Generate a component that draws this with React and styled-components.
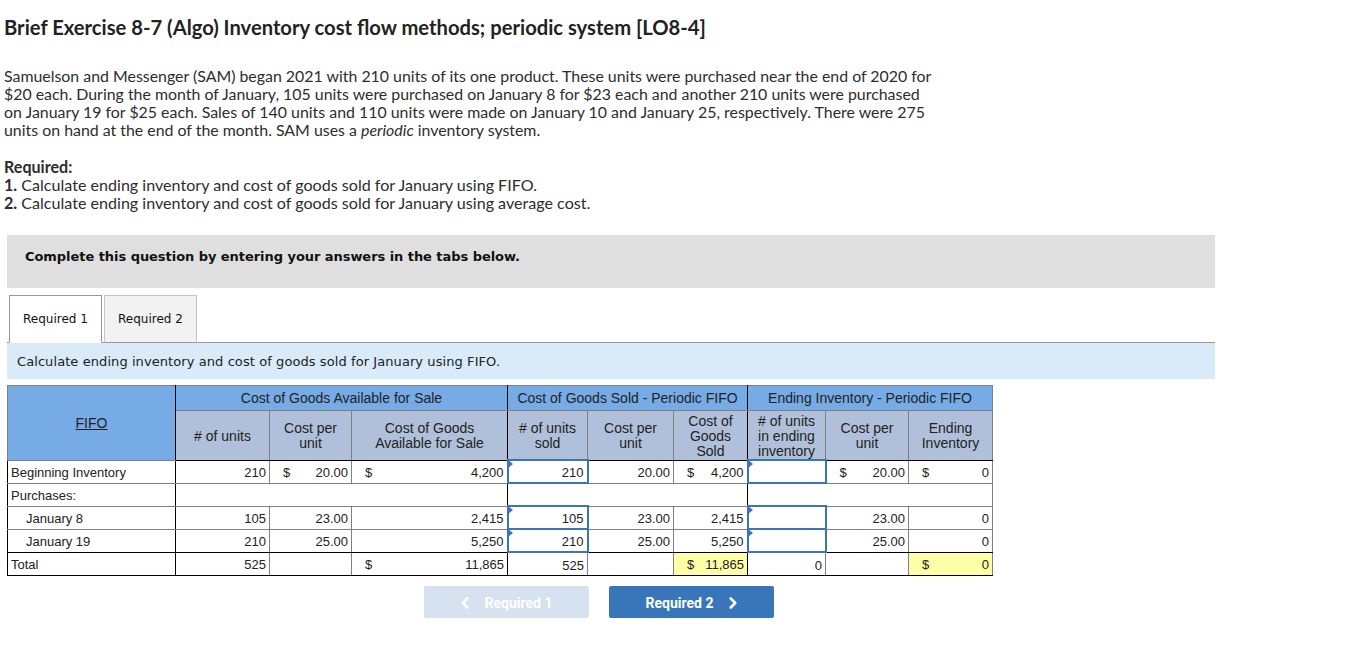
import React from "react";
import styled, { createGlobalStyle } from "styled-components";
import { ChevronLeft, ChevronRight } from "lucide-react";

const GlobalStyle = createGlobalStyle`
  html, body {
    margin: 0;
    padding: 0;
    background: #fff;
  }
`;

const Page = styled.div`
  width: 1368px;
  height: 653px;
  overflow: hidden;
  box-sizing: border-box;
  padding: 15px 0 0 0;
  font-family: Lato, "Open Sans", sans-serif;
  color: #2d2d2d;
`;

const Title = styled.h1`
  margin: 0 0 28px 4px;
  font-size: 20.2px;
  line-height: 24px;
  font-weight: 700;
  color: #222;
`;

const Text = styled.p`
  margin: 0 0 19px 4px;
  width: 932px;
  font-size: ${(p) => p.$size || "15.9px"};
  line-height: 18px;
`;

const Notice = styled.div`
  margin: 23px 153px 0 7px;
  height: 53px;
  box-sizing: border-box;
  padding: 0 0 10px 18px;
  display: flex;
  align-items: center;
  background: #dfdfdf;
  font-family: "DejaVu Sans", sans-serif;
  font-size: 13px;
  letter-spacing: -0.05px;
  font-weight: 700;
  color: #111;
`;

const Tabs = styled.div`
  margin: 7px 153px 0 7px;
  padding-left: 2px;
  display: flex;
  gap: 2px;
  height: 48px;
  box-sizing: border-box;
  border-bottom: 1px solid #999;
`;

const Tab = styled.div`
  width: 93px;
  height: 48px;
  box-sizing: border-box;
  display: flex;
  align-items: center;
  justify-content: center;
  font-family: "DejaVu Sans", sans-serif;
  font-size: 12px;
  color: #111;
  background: ${(p) => (p.$active ? "#fff" : "#f2f2f2")};
  border: 1px solid ${(p) => (p.$active ? "#999" : "#c4c4c4")};
  border-bottom: 1px solid ${(p) => (p.$active ? "#fff" : "#999")};
`;

const Prompt = styled.div`
  margin: 0 153px 6px 7px;
  height: 36px;
  padding-left: 10px;
  display: flex;
  align-items: center;
  background: #d9eaf9;
  font-family: "DejaVu Sans", sans-serif;
  font-size: 13px;
  letter-spacing: 0.08px;
  color: #222;
`;

const Grid = styled.table`
  margin-left: 7px;
  width: 985px;
  table-layout: fixed;
  border-collapse: collapse;
  font-family: "Liberation Sans", Arial, sans-serif;
  font-size: 13px;
  line-height: 15px;
  color: #222;
`;

const GroupHead = styled.th`
  height: 24px;
  padding: 0;
  background: #77abe6;
  font-weight: 400;
  font-size: 14px;
  text-align: center;
  border: 1px solid #808080;
  border-right: 1px solid ${(p) => (p.$last ? "#808080" : "#000")};
`;

const FifoHead = styled.th`
  padding: 2px 0 0;
  background: #77abe6;
  font-weight: 400;
  font-size: 14px;
  text-decoration: underline;
  border: 1px solid #808080;
  border-right: 1px solid #000;
`;

const SubHead = styled.th`
  height: 46px;
  padding: 2px 0 0;
  background: #b0c0da;
  font-weight: 400;
  font-size: 14px;
  line-height: 15px;
  text-align: center;
  border: 1px solid #808080;
  border-bottom: 1px solid #000;
  ${(p) => p.$edge && "border-right: 1px solid #000;"}
`;

const Cell = styled.td`
  height: ${(p) => (p.$short ? "19px" : "20px")};
  padding: 2px 3px 0;
  text-align: right;
  position: relative;
  background: ${(p) => (p.$total ? "#ffffa8" : "#fff")};
  border: 1px solid #808080;
  border-bottom: 1px solid ${(p) => (p.$dark ? "#000" : "#808080")};
  ${(p) => p.$edge && "border-right: 1px solid #000;"}
  ${(p) => p.$input && "border: 2px solid #3c74b4; height: 19px;"}
`;

const Label = styled(Cell)`
  text-align: left;
  padding-left: ${(p) => (p.$indent ? "18px" : "3px")};
  border-left-color: #000;
  border-right: 1px solid #000;
`;

const Money = styled.div`
  display: flex;
  justify-content: space-between;
  padding-left: ${(p) => p.$pad}px;
`;

const Marker = styled.span`
  position: absolute;
  left: -1px;
  top: -1px;
  border-style: solid;
  border-width: 4px 0 4px 5px;
  border-color: transparent transparent transparent #3c74b4;
`;

const Actions = styled.div`
  margin: 10px 0 0 424px;
  display: flex;
  gap: 20px;
`;

const NavButton = styled.div`
  width: 165px;
  height: 32px;
  box-sizing: border-box;
  padding: ${(p) => (p.$disabled ? "1px 5px 0 0" : "1px 0 0 5px")};
  display: flex;
  align-items: center;
  justify-content: center;
  gap: 11px;
  border-radius: 2px;
  background: ${(p) => (p.$disabled ? "#d7e2f0" : "#3976b9")};
  color: #fff;
  font-family: Roboto, sans-serif;
  font-size: 14px;
  font-weight: 700;
`;

const Input = ({ value }) => (
  <Cell $input>
    <Marker />
    {value}
  </Cell>
);

const Dollar = ({ value, pad = 10, ...rest }) => (
  <Cell {...rest}>
    <Money $pad={pad}>
      <span>$</span>
      <span>{value}</span>
    </Money>
  </Cell>
);

export default function App() {
  return (
    <Page>
      <GlobalStyle />
      <Title>Brief Exercise 8-7 (Algo) Inventory cost flow methods; periodic system [LO8-4]</Title>
      <Text>
        Samuelson and Messenger (SAM) began 2021 with 210 units of its one product. These units were purchased near the
        end of 2020 for $20 each. During the month of January, 105 units were purchased on January 8 for $23 each and
        another 210 units were purchased on January 19 for $25 each. Sales of 140 units and 110 units were made on
        January 10 and January 25, respectively. There were 275 units on hand at the end of the month. SAM uses a{" "}
        <em>periodic</em> inventory system.
      </Text>
      <Text $size="16.1px">
        <strong>Required:</strong>
        <br />
        <strong>1.</strong> Calculate ending inventory and cost of goods sold for January using FIFO.
        <br />
        <strong>2.</strong> Calculate ending inventory and cost of goods sold for January using average cost.
      </Text>
      <Notice>Complete this question by entering your answers in the tabs below.</Notice>
      <Tabs>
        <Tab $active>Required 1</Tab>
        <Tab>Required 2</Tab>
      </Tabs>
      <Prompt>Calculate ending inventory and cost of goods sold for January using FIFO.</Prompt>
      <Grid>
        <colgroup>
          <col style={{ width: 168 }} />
          <col style={{ width: 94 }} />
          <col style={{ width: 82 }} />
          <col style={{ width: 156 }} />
          <col style={{ width: 80 }} />
          <col style={{ width: 86 }} />
          <col style={{ width: 74 }} />
          <col style={{ width: 78 }} />
          <col style={{ width: 83 }} />
          <col style={{ width: 84 }} />
        </colgroup>
        <thead>
          <tr>
            <FifoHead rowSpan={2}>FIFO</FifoHead>
            <GroupHead colSpan={3}>Cost of Goods Available for Sale</GroupHead>
            <GroupHead colSpan={3}>Cost of Goods Sold - Periodic FIFO</GroupHead>
            <GroupHead colSpan={3} $last>Ending Inventory - Periodic FIFO</GroupHead>
          </tr>
          <tr>
            <SubHead># of units</SubHead>
            <SubHead>Cost per<br />unit</SubHead>
            <SubHead $edge>Cost of Goods<br />Available for Sale</SubHead>
            <SubHead># of units<br />sold</SubHead>
            <SubHead>Cost per<br />unit</SubHead>
            <SubHead $edge>Cost of<br />Goods<br />Sold</SubHead>
            <SubHead># of units<br />in ending<br />inventory</SubHead>
            <SubHead>Cost per<br />unit</SubHead>
            <SubHead>Ending<br />Inventory</SubHead>
          </tr>
        </thead>
        <tbody>
          <tr>
            <Label>Beginning Inventory</Label>
            <Cell>210</Cell>
            <Dollar value="20.00" />
            <Dollar value="4,200" $edge />
            <Input value="210" />
            <Cell>20.00</Cell>
            <Dollar value="4,200" $edge />
            <Input />
            <Dollar value="20.00" />
            <Dollar value="0" />
          </tr>
          <tr>
            <Label $short>Purchases:</Label>
            <Cell colSpan={3} $edge $short />
            <Cell colSpan={3} $edge $short />
            <Cell colSpan={3} $short />
          </tr>
          <tr>
            <Label $indent>January 8</Label>
            <Cell>105</Cell>
            <Cell>23.00</Cell>
            <Cell $edge>2,415</Cell>
            <Input value="105" />
            <Cell>23.00</Cell>
            <Cell $edge>2,415</Cell>
            <Input />
            <Cell>23.00</Cell>
            <Cell>0</Cell>
          </tr>
          <tr>
            <Label $indent $dark>January 19</Label>
            <Cell $dark>210</Cell>
            <Cell $dark>25.00</Cell>
            <Cell $dark $edge>5,250</Cell>
            <Input value="210" />
            <Cell $dark>25.00</Cell>
            <Cell $dark $edge>5,250</Cell>
            <Input />
            <Cell $dark>25.00</Cell>
            <Cell $dark>0</Cell>
          </tr>
          <tr>
            <Label $dark>Total</Label>
            <Cell $dark>525</Cell>
            <Cell $dark />
            <Dollar value="11,865" $dark $edge />
            <Cell $dark>525</Cell>
            <Cell $dark />
            <Dollar value="11,865" $dark $edge $total />
            <Cell $dark>0</Cell>
            <Cell $dark />
            <Dollar value="0" $dark $total />
          </tr>
        </tbody>
      </Grid>
      <Actions>
        <NavButton $disabled>
          <ChevronLeft size={18} strokeWidth={3.5} />
          Required 1
        </NavButton>
        <NavButton>
          Required 2
          <ChevronRight size={18} strokeWidth={3.5} />
        </NavButton>
      </Actions>
    </Page>
  );
}
